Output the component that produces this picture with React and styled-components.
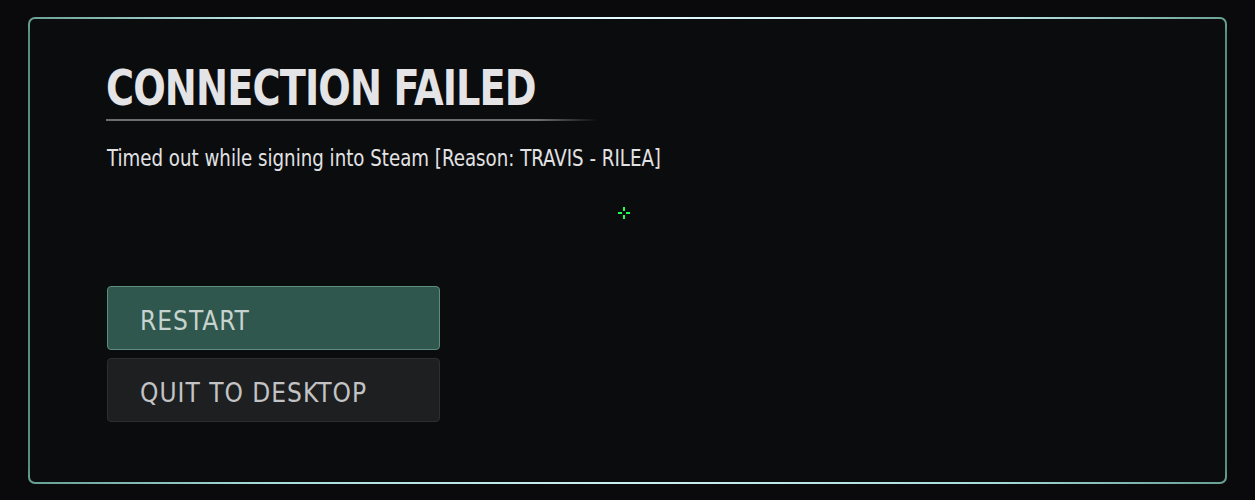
import React from 'react';
import styled, { createGlobalStyle } from 'styled-components';

const GlobalStyle = createGlobalStyle`
  html, body {
    margin: 0;
    padding: 0;
    background: #0a0a0c;
  }
  body {
    font-family: "DejaVu Sans Condensed", "DejaVu Sans", sans-serif;
  }
`;

const Page = styled.div`
  width: 1255px;
  height: 500px;
  padding: 17px 28px 16px 28px;
  box-sizing: border-box;
`;

const Frame = styled.div`
  position: relative;
  height: 100%;
  padding: 2px;
  box-sizing: border-box;
  border-radius: 7px;
  background:
    radial-gradient(ellipse 55% 8% at 50% 0%, #e6fbff 0%, #bfe8ea 55%, rgba(90, 150, 136, 0) 100%),
    radial-gradient(ellipse 55% 8% at 50% 100%, #cdf0f2 0%, #a8dcdc 55%, rgba(90, 150, 136, 0) 100%),
    #558f80;
`;

const Panel = styled.div`
  position: relative;
  height: 100%;
  box-sizing: border-box;
  border-radius: 5px;
  background: #0b0c0e;
  padding: 40px 76px 0 76px;
`;

const Title = styled.h1`
  margin: 0;
  font-family: "DejaVu Sans Condensed", "DejaVu Sans", sans-serif;
  font-weight: 700;
  font-size: 49px;
  line-height: 60px;
  letter-spacing: -1px;
  color: #e4e4e6;
  white-space: nowrap;
  transform: scaleX(0.868);
  transform-origin: left center;
`;

const Rule = styled.div`
  width: 492px;
  height: 2px;
  background: linear-gradient(90deg, #6d6d70 0%, #6d6d70 88%, rgba(109, 109, 112, 0) 100%);
`;

const Message = styled.p`
  margin: 22px 0 0 1px;
  font-family: "DejaVu Sans Condensed", "DejaVu Sans", sans-serif;
  font-size: 23px;
  line-height: 30px;
  color: #e2e2e4;
  white-space: nowrap;
  transform: scaleX(0.88);
  transform-origin: left center;
`;

const Crosshair = styled.div`
  position: absolute;
  left: 588px;
  top: 185px;
  width: 12px;
  height: 12px;
  color: #1eff55;
`;

const Actions = styled.div`
  display: flex;
  flex-direction: column;
  gap: 8px;
  margin-top: 113px;
  margin-left: 1px;
  width: 333px;
`;

const Button = styled.button`
  display: flex;
  align-items: center;
  height: 64px;
  padding: 6px 0 0 32px;
  box-sizing: border-box;
  border-radius: 4px;
  border: 1px solid ${p => (p.$primary ? '#5d8d80' : '#2e2e31')};
  background: ${p => (p.$primary ? '#2f574d' : '#1e1f21')};
  color: ${p => (p.$primary ? '#c7d3ce' : '#c3c3c5')};
  font-family: "DejaVu Sans Condensed", "DejaVu Sans", sans-serif;
  font-size: 26px;
  letter-spacing: 1px;
  text-align: left;
  cursor: pointer;
`;

export default function App() {
  return (
    <>
      <GlobalStyle />
      <Page>
        <Frame>
          <Panel>
            <Title>CONNECTION FAILED</Title>
            <Rule />
            <Message>Timed out while signing into Steam [Reason: TRAVIS - RILEA]</Message>
            <Crosshair>
              <svg width="12" height="12" viewBox="0 0 12 12" fill="currentColor">
                <rect x="5" y="0" width="2" height="4" />
                <rect x="5" y="8" width="2" height="4" />
                <rect x="0" y="5" width="4" height="2" />
                <rect x="8" y="5" width="4" height="2" />
              </svg>
            </Crosshair>
            <Actions>
              <Button $primary>RESTART</Button>
              <Button>QUIT TO DESKTOP</Button>
            </Actions>
          </Panel>
        </Frame>
      </Page>
    </>
  );
}
